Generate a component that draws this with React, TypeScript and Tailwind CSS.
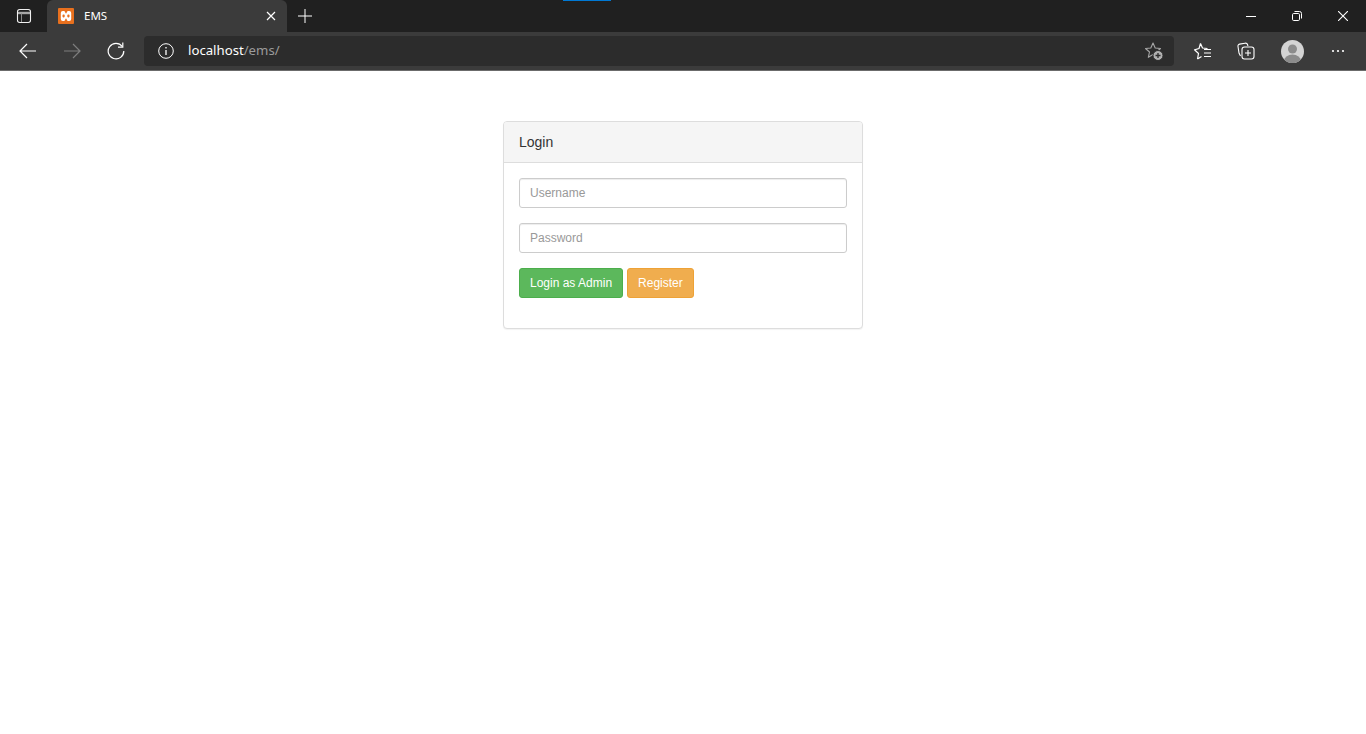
export default function App() {
  return (
    <div className="relative min-h-[734px] bg-white font-['Liberation_Sans',Arial,sans-serif]">
      <div className="absolute left-[563px] top-0 h-px w-[48px] bg-[#0078d4]" />
      <header className="font-['Noto_Sans','Open_Sans',sans-serif]">
        <div className="flex h-[32px] items-end bg-[#202020]">
          <div className="flex h-[32px] w-[47px] items-center justify-center pl-[1px]">
            <svg width="16" height="16" viewBox="0 0 16 16" fill="none">
              <path d="M2 5H14" stroke="#a8a8a8" strokeWidth="2.400" />
              <path d="M5.500 5.500V14" stroke="#8a8a8a" strokeWidth="1" />
              <rect x="1.500" y="1.500" width="13" height="13" rx="2.200" stroke="#f0f0f0" strokeWidth="1.100" />
            </svg>
          </div>
          <div className="flex h-[32px] w-[240px] items-center rounded-t-[6px] bg-[#3b3b3b] pl-[11px] pr-[11px]">
            <svg width="16" height="16" viewBox="0 0 16 16">
              <rect width="16" height="16" rx="1" fill="#e8701e" />
              <rect x="2.800" y="3" width="10.400" height="10" rx="2" fill="#ffffff" />
              <path d="M6.400 3h3.200L8 5.800ZM6.400 13h3.200L8 10.200Z" fill="#e8701e" />
              <rect x="4.500" y="6.600" width="2.200" height="2.800" rx="0.800" fill="#e8701e" />
              <rect x="9.300" y="6.600" width="2.200" height="2.800" rx="0.800" fill="#e8701e" />
            </svg>
            <span className="ml-[10px] flex-1 text-[11.500px] leading-none text-white">EMS</span>
            <svg width="10" height="10" viewBox="0 0 10 10" stroke="#fff" strokeWidth="1.200">
              <path d="M1 1l8 8M9 1l-8 8" />
            </svg>
          </div>
          <div className="flex h-[32px] w-[36px] items-center justify-center">
            <svg width="14" height="14" viewBox="0 0 14 14" stroke="#fff" strokeWidth="1">
              <path d="M7 0v14M0 7h14" />
            </svg>
          </div>
          <div className="flex-1" />
          <div className="flex h-[32px] items-center">
            <div className="flex w-[46px] justify-center">
              <svg width="10" height="10" viewBox="0 0 10 10" stroke="#fff" strokeWidth="1"><path d="M0 5.500h10" /></svg>
            </div>
            <div className="flex w-[46px] justify-center">
              <svg width="10" height="10" viewBox="0 0 10 10" fill="none" stroke="#fff" strokeWidth="1">
                <rect x="0.500" y="2.500" width="7" height="7" rx="1.200" />
                <path d="M2.500 .500h5a2 2 0 0 1 2 2v5" />
              </svg>
            </div>
            <div className="flex w-[46px] justify-center">
              <svg width="10" height="10" viewBox="0 0 10 10" stroke="#fff" strokeWidth="1.100"><path d="M0 0l10 10M10 0L0 10" /></svg>
            </div>
          </div>
        </div>
        <div className="flex h-[39px] items-center border-b border-b-[#6b6b6b] bg-[#3b3b3b]">
          <div className="flex w-[144px] items-center pl-[10px]">
            <div className="flex w-[36px] justify-center">
              <svg width="18" height="16" viewBox="0 0 18 16" fill="none" stroke="#fff" strokeWidth="1.200"><path d="M17 8H1M8 1L1 8l7 7" /></svg>
            </div>
            <div className="ml-[8px] flex w-[36px] justify-center">
              <svg width="18" height="16" viewBox="0 0 18 16" fill="none" stroke="#7e7e7e" strokeWidth="1.200"><path d="M1 8h16M10 1l7 7-7 7" /></svg>
            </div>
            <div className="ml-[8px] flex w-[36px] justify-center">
              <svg width="18" height="18" viewBox="0 0 18 18" fill="none" stroke="#fff" strokeWidth="1.200">
                <path d="M15.300 4.500A7.800 7.800 0 1 0 16.800 9" />
                <path d="M11 5.200h4.800V.500" />
              </svg>
            </div>
          </div>
          <div className="flex h-[30px] w-[1030px] items-center rounded-[4px] bg-[#2c2c2c] pl-[14px] pr-[10px]">
            <svg width="16" height="16" viewBox="0 0 16 16" fill="none" stroke="#fff" strokeWidth="1">
              <circle cx="8" cy="8" r="7.300" />
              <path d="M8 7v5M8 4v1.400" strokeWidth="1.300" />
            </svg>
            <div className="ml-[14px] flex-1 text-[13.200px] leading-none">
              <span className="text-white">localhost</span>
              <span className="text-[#9b9b9b]">/ems/</span>
            </div>
            <svg width="20" height="20" viewBox="0 0 20 20" fill="none">
              <path d="M9 2l2.200 5 5.300.5-4 3.500 1.200 5.300L9 13.500 4.300 16.300 5.500 11 1.500 7.500 6.800 7Z" stroke="#a6a6a6" strokeWidth="1.100" strokeLinejoin="round" />
              <circle cx="14" cy="14.500" r="5" fill="#b0b0b0" stroke="#2c2c2c" strokeWidth="1" />
              <path d="M14 12v5M11.500 14.500h5" stroke="#2c2c2c" strokeWidth="1.300" />
            </svg>
          </div>
          <div className="flex flex-1 items-center pl-[8px]">
            <div className="flex w-[40px] justify-center">
              <svg width="20" height="20" viewBox="0 0 20 20" fill="none" stroke="#fff" strokeWidth="1.200" strokeLinejoin="round">
                <path d="M8.500 2.500l2 4.500 5 .5M5.500 18l1-5.500L2.500 8.800 7 7.500l1.500-5M5.500 18l4-2.500" />
                <path d="M12 8.500h7M12 12h7M12 15.500h7" />
              </svg>
            </div>
            <div className="ml-[4px] flex w-[40px] justify-center">
              <svg width="20" height="20" viewBox="0 0 20 20" fill="none" stroke="#fff" strokeWidth="1.100">
                <path d="M4.500 15 3 12 2 5.500a2 2 0 0 1 1.500-2.400L9 2.200c1.400-.2 2.300.4 2.700 1.800l.2 1" />
                <rect x="6" y="6" width="12" height="12" rx="2.500" />
                <path d="M12 9v6M9 12h6" />
              </svg>
            </div>
            <div className="ml-[15px] flex h-[23px] w-[23px] items-center justify-center overflow-hidden rounded-full bg-[#d4d4d4]">
              <svg width="23" height="23" viewBox="0 0 23 23" fill="#8c8c8c">
                <circle cx="11.500" cy="9" r="4.500" />
                <ellipse cx="11.500" cy="21" rx="8.500" ry="6.500" />
              </svg>
            </div>
            <div className="ml-[26px] flex w-[16px] justify-center">
              <svg width="14" height="4" viewBox="0 0 14 4" fill="#fff">
                <circle cx="2" cy="2" r="1.100" />
                <circle cx="7" cy="2" r="1.100" />
                <circle cx="12" cy="2" r="1.100" />
              </svg>
            </div>
          </div>
        </div>
      </header>
      <main className="flex justify-center pt-[50px]">
        <section className="h-[208px] w-[360px] rounded-[4px] border border-[#dddddd] bg-white shadow-[0_1px_1px_rgba(0,0,0,0.05)]">
          <div className="flex h-[41px] items-center rounded-t-[3px] border-b border-[#dddddd] bg-[#f5f5f5] px-[15px] text-[14px] text-[#333333]">
            Login
          </div>
          <form className="flex flex-col gap-[15px] p-[15px]">
            <input
              placeholder="Username"
              className="h-[30px] w-full rounded-[3px] border border-[#cccccc] bg-white px-[10px] text-[12px] text-[#555555] shadow-[inset_0_1px_1px_rgba(0,0,0,0.075)] placeholder:text-[#999999]"
            />
            <input
              placeholder="Password"
              className="h-[30px] w-full rounded-[3px] border border-[#cccccc] bg-white px-[10px] text-[12px] text-[#555555] shadow-[inset_0_1px_1px_rgba(0,0,0,0.075)] placeholder:text-[#999999]"
            />
            <div className="flex gap-[4px]">
              <button type="button" className="h-[30px] rounded-[3px] border border-[#4cae4c] bg-[#5cb85c] px-[10px] text-[12px] text-white">
                Login as Admin
              </button>
              <button type="button" className="h-[30px] rounded-[3px] border border-[#eea236] bg-[#f0ad4e] px-[10px] text-[12px] text-white">
                Register
              </button>
            </div>
          </form>
        </section>
      </main>
    </div>
  );
}
